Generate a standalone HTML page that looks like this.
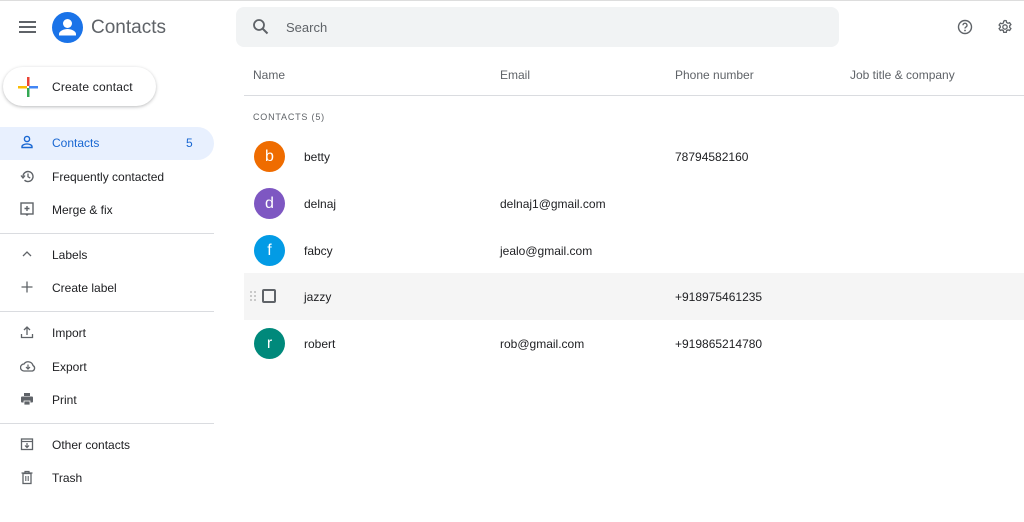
<!DOCTYPE html>
<html><head><meta charset="utf-8"><style>
*{margin:0;padding:0;box-sizing:border-box}
body{width:1024px;height:522px;background:#fff;font-family:"Liberation Sans",Arial,sans-serif;color:#202124;position:relative;overflow:hidden}
.a{position:absolute}
.t{font-size:12px;color:#202124;letter-spacing:.2px}
.nav{position:absolute;left:0;width:214px;height:34px;font-size:12px;color:#202124}
.nav span{position:absolute;left:52px;top:10px}
.nav svg{position:absolute;left:20px;top:9px}
.hr{position:absolute;left:0;width:214px;height:1px;background:#dadce0}
.av{position:absolute;left:254px;width:31px;height:31px;border-radius:50%;color:#fff;font-size:16px;text-align:center;line-height:31px}
.nm{position:absolute;left:304px;font-size:12px}
.em{position:absolute;left:500px;font-size:12px}
.ph{position:absolute;left:675px;font-size:12px}
.hd{position:absolute;top:68px;font-size:12px;color:#5f6368}
</style></head><body>
<div class="a" style="left:0;top:0;width:1024px;height:1px;background:#ddd"></div>
<svg class="a" style="left:19px;top:20px" width="18" height="14"><rect y="1" width="17" height="2" fill="#5f6368"/><rect y="6" width="17" height="2" fill="#5f6368"/><rect y="11" width="17" height="2" fill="#5f6368"/></svg>
<svg class="a" style="left:52px;top:12px" width="31" height="31"><circle cx="15.5" cy="15.5" r="15.5" fill="#1a73e8"/><circle cx="15.5" cy="11.5" r="4.5" fill="#fff"/><path d="M7 22c0-3 5-5 8.5-5s8.5 2 8.5 5v1.5H7z" fill="#fff"/></svg>
<div class="a" style="left:91px;top:17px;font-size:19px;color:#5f6368">Contacts</div>
<div class="a" style="left:3px;top:67px;width:153px;height:39px;border-radius:20px;background:#fff;box-shadow:0 1px 3px rgba(60,64,67,.35)"></div>
<svg class="a" style="left:17px;top:76px" width="22" height="22"><rect x="10" y="1" width="2.5" height="9" fill="#ea4335"/><rect x="10" y="12" width="2.5" height="9" fill="#34a853"/><rect x="1" y="10" width="9" height="2.5" fill="#fbbc04"/><rect x="12" y="10" width="9" height="2.5" fill="#4285f4"/></svg>
<div class="a t" style="left:52px;top:80px">Create contact</div>
<div class="a" style="left:0;top:127px;width:214px;height:33px;background:#e8f0fe;border-radius:0 17px 17px 0"></div>
<div class="nav" style="top:126px;color:#1967d2"><svg width="14" height="14" viewBox="0 0 14 14"><circle cx="7" cy="4" r="2.6" fill="none" stroke="#1967d2" stroke-width="1.4"/><path d="M2 12.5v-1c0-1.6 3-2.6 5-2.6s5 1 5 2.6v1z" fill="none" stroke="#1967d2" stroke-width="1.4"/></svg><span style="color:#1967d2">Contacts</span><span style="left:186px;color:#1967d2">5</span></div>
<div class="nav" style="top:160px"><svg width="15" height="15" viewBox="0 0 15 15"><path d="M3 7.5a5 5 0 1 1 1.5 3.6" fill="none" stroke="#5f6368" stroke-width="1.4"/><path d="M1 6.5l2 2.5 2-2.5" fill="none" stroke="#5f6368" stroke-width="1.3"/><path d="M8 4.5v3.3l2.2 1.3" fill="none" stroke="#5f6368" stroke-width="1.3"/></svg><span>Frequently contacted</span></div>
<div class="nav" style="top:193px"><svg width="14" height="15" viewBox="0 0 14 15"><rect x="1" y="1" width="12" height="11" fill="none" stroke="#5f6368" stroke-width="1.4"/><path d="M7 4v5M4.5 6.5h5" stroke="#5f6368" stroke-width="1.4"/><path d="M5 12l2 2 2-2" fill="#5f6368"/></svg><span>Merge &amp; fix</span></div>
<div class="hr" style="top:233px"></div>
<div class="nav" style="top:238px"><svg width="14" height="14"><path d="M3 9l4-4 4 4" fill="none" stroke="#5f6368" stroke-width="1.3"/></svg><span>Labels</span></div>
<div class="nav" style="top:271px"><svg width="14" height="14"><path d="M7 1.5v11M1.5 7h11" stroke="#5f6368" stroke-width="1.3"/></svg><span>Create label</span></div>
<div class="hr" style="top:311px"></div>
<div class="nav" style="top:316px"><svg width="14" height="14"><path d="M7 10V2M4 5l3-3 3 3M1.5 9v3.5h11V9" fill="none" stroke="#5f6368" stroke-width="1.3"/></svg><span>Import</span></div>
<div class="nav" style="top:350px"><svg width="16" height="14"><path d="M4 12a3.5 3.5 0 0 1 0-7 5 5 0 0 1 9 1.5 3 3 0 0 1-0.5 5.5z" fill="none" stroke="#5f6368" stroke-width="1.3"/><path d="M8 5.5v4M6 8l2 2 2-2" fill="none" stroke="#5f6368" stroke-width="1.2"/></svg><span>Export</span></div>
<div class="nav" style="top:383px"><svg width="14" height="14"><rect x="4" y="1" width="6" height="3" fill="#5f6368"/><rect x="1" y="4.5" width="12" height="6" rx="1" fill="#5f6368"/><rect x="4" y="9" width="6" height="4" fill="#5f6368" stroke="#fff" stroke-width=".8"/></svg><span>Print</span></div>
<div class="hr" style="top:423px"></div>
<div class="nav" style="top:428px"><svg width="14" height="14"><rect x="1.5" y="2" width="11" height="10.5" fill="none" stroke="#5f6368" stroke-width="1.3"/><path d="M1.5 4.5h11" stroke="#5f6368" stroke-width="1.2"/><path d="M7 6v4M5 8.5l2 2 2-2" fill="none" stroke="#5f6368" stroke-width="1.2"/></svg><span>Other contacts</span></div>
<div class="nav" style="top:461px"><svg width="14" height="15"><path d="M1.5 3h11M5 3V1.5h4V3" fill="none" stroke="#5f6368" stroke-width="1.2"/><rect x="3" y="3.5" width="8" height="10" fill="none" stroke="#5f6368" stroke-width="1.3"/><path d="M5.8 6v5M8.2 6v5" stroke="#5f6368" stroke-width="1.1"/></svg><span>Trash</span></div>

<div class="a" style="left:236px;top:7px;width:603px;height:40px;background:#f1f3f4;border-radius:8px"></div>
<svg class="a" style="left:252px;top:18px" width="18" height="18"><circle cx="7" cy="7" r="5" fill="none" stroke="#5f6368" stroke-width="1.8"/><path d="M10.5 10.5l5 5" stroke="#5f6368" stroke-width="2"/></svg>
<div class="a" style="left:286px;top:20px;font-size:13px;color:#5f6368">Search</div>
<svg class="a" style="left:957px;top:19px" width="16" height="16"><circle cx="8" cy="8" r="6.5" fill="none" stroke="#5f6368" stroke-width="1.4"/><path d="M6 6.3a2 2 0 1 1 2.8 1.8c-.6.3-.8.7-.8 1.4" fill="none" stroke="#5f6368" stroke-width="1.3"/><circle cx="8" cy="11.5" r=".9" fill="#5f6368"/></svg>
<svg class="a" style="left:997px;top:19px" width="16" height="16" viewBox="0 0 16 16"><path d="M8 1.5l1.3.3.3 1.7 1.4.8 1.6-.6 1.3 1.9-1.2 1.2v1.6l1.2 1.2-1.3 1.9-1.6-.6-1.4.8-.3 1.7H6.7l-.3-1.7-1.4-.8-1.6.6-1.3-1.9 1.2-1.2V7.2L2.1 6l1.3-1.9 1.6.6 1.4-.8.3-1.7z" fill="none" stroke="#5f6368" stroke-width="1.3"/><circle cx="8" cy="8" r="2.2" fill="none" stroke="#5f6368" stroke-width="1.3"/></svg>

<div class="hd" style="left:253px">Name</div>
<div class="hd" style="left:500px">Email</div>
<div class="hd" style="left:675px">Phone number</div>
<div class="hd" style="left:850px">Job title &amp; company</div>
<div class="a" style="left:244px;top:95px;width:780px;height:1px;background:#dadce0"></div>
<div class="a" style="left:253px;top:112px;font-size:9px;letter-spacing:.8px;color:#5f6368">CONTACTS (5)</div>

<div class="av" style="top:141px;background:#ef6c00">b</div><div class="nm" style="top:150px">betty</div><div class="ph" style="top:150px">78794582160</div>
<div class="av" style="top:188px;background:#7e57c2">d</div><div class="nm" style="top:197px">delnaj</div><div class="em" style="top:197px">delnaj1@gmail.com</div>
<div class="av" style="top:235px;background:#039be5">f</div><div class="nm" style="top:244px">fabcy</div><div class="em" style="top:244px">jealo@gmail.com</div>
<div class="a" style="left:244px;top:273px;width:780px;height:47px;background:#f5f5f5"></div>
<svg class="a" style="left:249px;top:290px" width="8" height="12"><g fill="#bbb"><circle cx="2" cy="2" r="1"/><circle cx="6" cy="2" r="1"/><circle cx="2" cy="6" r="1"/><circle cx="6" cy="6" r="1"/><circle cx="2" cy="10" r="1"/><circle cx="6" cy="10" r="1"/></g></svg>
<div class="a" style="left:262px;top:289px;width:14px;height:14px;border:2px solid #5f6368;border-radius:2px"></div>
<div class="nm" style="top:290px">jazzy</div><div class="ph" style="top:290px">+918975461235</div>
<div class="av" style="top:328px;background:#00897b">r</div><div class="nm" style="top:337px">robert</div><div class="em" style="top:337px">rob@gmail.com</div><div class="ph" style="top:337px">+919865214780</div>
</body></html>
